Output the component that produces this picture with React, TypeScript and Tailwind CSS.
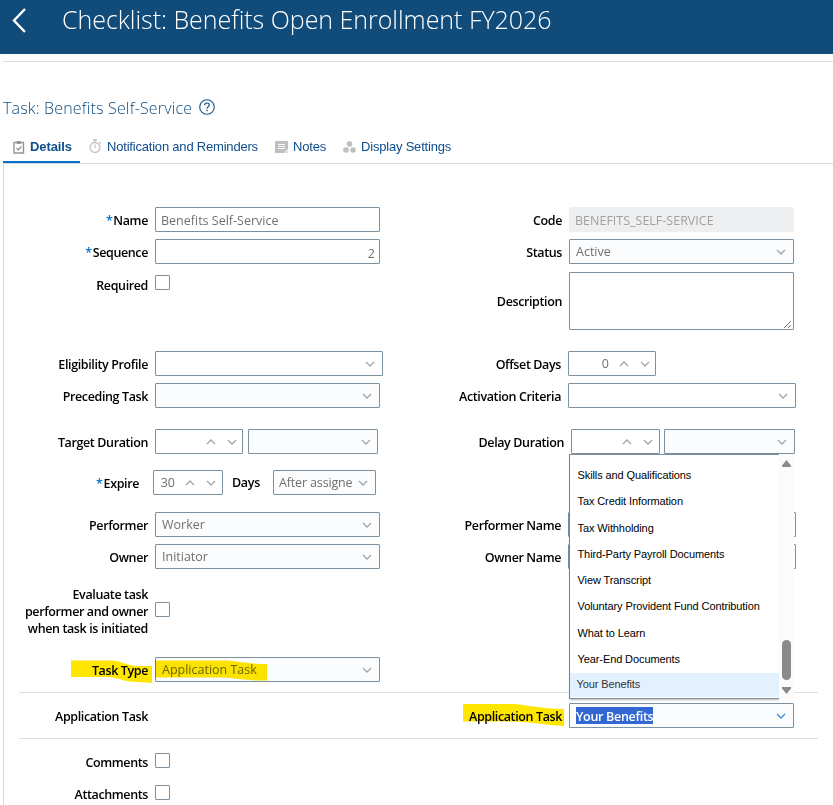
import type { ReactNode } from 'react';
import { clsx } from 'clsx';

const HIGHLIGHT = '#ffe600';

const tasks = [
  'Skills and Qualifications',
  'Tax Credit Information',
  'Tax Withholding',
  'Third-Party Payroll Documents',
  'View Transcript',
  'Voluntary Provident Fund Contribution',
  'What to Learn',
  'Year-End Documents',
];

function Chevron({ up, className = 'text-[#a3a6a9]' }: { up?: boolean; className?: string }) {
  return (
    <svg width="10" height="6" viewBox="0 0 10 6" fill="none" className={clsx('shrink-0', className)}>
      <path d={up ? 'M1 5 L5 1 L9 5' : 'M1 1 L5 5 L9 1'} stroke="currentColor" strokeWidth="1.3" />
    </svg>
  );
}

function Row({
  label,
  required,
  className,
  labelClass = 'w-[144px] top-px',
  children,
}: {
  label: ReactNode;
  required?: boolean;
  className?: string;
  labelClass?: string;
  children?: ReactNode;
}) {
  return (
    <div className={clsx('flex items-center', className)}>
      <div
        className={clsx(
          'shrink-0 mr-[7px] text-right leading-[17px] tracking-[-0.38px] whitespace-nowrap relative z-10',
          labelClass,
        )}
      >
        {required && <span className="text-[#0572ce] mr-px">*</span>}
        {label}
      </div>
      {children}
    </div>
  );
}

function Select({
  value,
  className = 'w-[225px]',
  textClass,
  pad = 'pr-[7px]',
}: {
  value?: string;
  className?: string;
  textClass?: string;
  pad?: string;
}) {
  return (
    <div className={clsx('h-[25px] shrink-0 flex items-center border border-[#7c919d] rounded-[1px] pl-1.5', className, pad)}>
      <span className={clsx('flex-1 whitespace-nowrap font-medium text-[#707070] relative top-px', textClass)}>{value}</span>
      <Chevron />
    </div>
  );
}

function Spinner({ value, className }: { value?: string; className: string }) {
  return (
    <div className={clsx('h-[25px] shrink-0 flex items-center justify-end border border-[#7c919d] rounded-[1px]', className)}>
      <span className="font-medium text-[#707070] mr-2.5 relative top-px">{value}</span>
      <Chevron up />
      <Chevron className="ml-[11px] text-[#a3a6a9]" />
    </div>
  );
}

function Checkbox({ className }: { className?: string }) {
  return <div className={clsx('size-[15px] shrink-0 border border-[#7c919d] rounded-[1px] bg-white', className)} />;
}

function Tabs() {
  return (
    <div className="flex h-[27px] ml-[3px] text-[13px] font-normal text-[#0f4d8c] font-[Liberation_Sans,Arial,sans-serif]">
      <div className="flex w-[77px] h-[27px] pl-[9px] border-b-2 border-[#0572ce] font-bold relative z-10">
        <svg width="13" height="14" viewBox="0 0 13 14" className="mt-1 mr-[5px]" fill="none" stroke="#949494">
          <path d="M2 2.5h9.500v10.500H2z" strokeWidth="1.400" />
          <path d="M5 1.500h3.500v2H5z" fill="#949494" />
          <path d="M4.500 8l1.800 1.800L9.500 6.500" strokeWidth="1.300" />
        </svg>
        <span className="leading-[21px] tracking-[-0.1px]">Details</span>
      </div>
      <div className="flex ml-[9px]">
        <svg width="13" height="15" viewBox="0 0 13 15" className="mt-[3px] mr-[5px]" fill="none" stroke="#c4c4c4">
          <circle cx="6" cy="8.500" r="5" strokeWidth="1.300" />
          <path d="M4 1h4M6 1v2M6 5.500V9M10.500 3l1.500 1.500" strokeWidth="1.300" />
        </svg>
        <span className="w-[151px] leading-[21px] tracking-[-0.2px] whitespace-nowrap">Notification and Reminders</span>
      </div>
      <div className="flex ml-[17px]">
        <svg width="13" height="12" viewBox="0 0 13 12" className="mt-[5px] mr-[5px]">
          <path d="M0 0h13v8l-4 4H0z" fill="#bfbfbf" />
          <path d="M10 12l3-3v3z" fill="#d5d5d5" />
          <path d="M3 3.500h7M3 5.500h7M3 7.500h7" stroke="#fff" strokeWidth=".9" />
        </svg>
        <span className="w-[33px] leading-[21px] tracking-[-0.2px] whitespace-nowrap">Notes</span>
      </div>
      <div className="flex ml-[17px]">
        <svg width="13" height="12" viewBox="0 0 13 12" className="mt-[5px] mr-[5px]" fill="#bfbfbf">
          <circle cx="6.500" cy="3" r="2.800" />
          <circle cx="3" cy="9" r="2.800" />
          <circle cx="10" cy="9" r="2.800" />
        </svg>
        <span className="leading-[21px] tracking-[-0.2px] whitespace-nowrap">Display Settings</span>
      </div>
    </div>
  );
}

function TaskMenu() {
  return (
    <div className="absolute left-0 bottom-[29px] w-[225px] h-[245px] z-20 flex bg-white border-l border-[#7c919d] text-[11px] text-black font-normal font-[Liberation_Sans,Arial,sans-serif]">
      <div className="w-[209px] flex flex-col border-y border-[#7c919d] pt-[7px] shadow-[0_1px_2px_rgba(0,0,0,0.3)]">
        {tasks.map((task) => (
          <div key={task} className="h-[26.3px] pl-[7.5px] leading-[26px] tracking-[-0.1px] whitespace-nowrap">
            {task}
          </div>
        ))}
        <div className="h-6 pl-[6.5px] mt-px leading-[23px] tracking-[-0.1px] bg-[#e3f1ff] text-[#333]">Your Benefits</div>
      </div>
      <div className="w-[15px] flex flex-col items-center bg-[#fbfbfb] pb-[5px]">
        <svg width="9" height="7" viewBox="0 0 9 7" className="mt-1.5" fill="#8a8a8a">
          <path d="M4.500 0L9 5.500V7H0V5.500z" />
        </svg>
        <div className="w-[9px] h-10 rounded-full bg-[#8a8a8a] mt-auto mb-[7px]" />
        <svg width="9" height="7" viewBox="0 0 9 7" fill="#8a8a8a">
          <path d="M4.500 7L9 1.500V0H0v1.500z" />
        </svg>
      </div>
    </div>
  );
}

export default function App() {
  return (
    <div className="w-[833px] h-[805px] overflow-hidden bg-white font-['Open_Sans','Noto_Sans',sans-serif] text-[12.5px] font-semibold text-black">
      <header className="h-[54px] bg-[#114b7a] flex items-start">
        <svg width="16" height="26" viewBox="0 0 16 26" fill="none" className="ml-3 mt-2 mr-[34px]">
          <path d="M13 1L2 12.500L13 24" stroke="#fff" strokeWidth="2.400" />
        </svg>
        <h1 className="text-[25px] leading-[38px] tracking-[-0.03px] font-light text-white whitespace-nowrap">
          Checklist: Benefits Open Enrollment FY2026
        </h1>
      </header>
      <div className="ml-[3px] mt-[7px] h-px bg-[#d6dfe6]" />

      <div className="flex items-center h-[30px] mt-[30px] pl-[3px]">
        <h2 className="w-[189px] text-[16px] tracking-[0.17px] font-light text-[#0f4d80] whitespace-nowrap relative top-px">
          Task: Benefits Self-Service
        </h2>
        <svg width="16" height="16" viewBox="0 0 16 16" fill="none" stroke="#145288" className="ml-[7px]">
          <circle cx="8" cy="8" r="7.300" strokeWidth="1.100" />
          <path d="M5.700 6.200C5.700 4.700 6.700 4 8 4s2.300.8 2.300 2.100C10.300 7.700 8 7.900 8 9.700" strokeWidth="1.200" />
          <path d="M8 10.800v1.400" strokeWidth="1.300" />
        </svg>
      </div>

      <div className="pt-[14px]">
        <Tabs />
      </div>

      <main className="ml-[3px] h-[642px] border-l border-t border-[#d6dade]">
        <div className="flex pt-[43px] h-[528px]">
          <div className="w-[414px]">
            <Row label="Name" required>
              <div className="w-[225px] h-[25px] border border-[#7c919d] rounded-[1px] px-[5px] leading-[25px] font-medium text-[#707070]">
                Benefits Self-Service
              </div>
            </Row>
            <Row label="Sequence" required className="mt-[7px]">
              <div className="w-[225px] h-[25px] border border-[#7c919d] rounded-[1px] px-1 text-right leading-[27px] font-medium text-[#707070]">
                2
              </div>
            </Row>
            <Row label="Required" className="mt-[9px] h-[25px]" labelClass="w-[144px]">
              <Checkbox className="relative -top-[3px]" />
            </Row>
            <Row label="Eligibility Profile" className="mt-[53px]" labelClass="w-[144px] top-px tracking-[-0.25px]">
              <Select className="w-[228px] bg-white" />
            </Row>
            <Row label="Preceding Task" className="mt-[7px]">
              <Select className="w-[225px] bg-[#fafcfe]" />
            </Row>
            <Row label="Target Duration" className="mt-[21px]">
              <Spinner className="w-[88px] pr-[5px]" />
              <Select className="w-[130px] ml-[5px] bg-[#fafcfe]" pad="pr-1.5" />
            </Row>
            <Row label="Expire" required className="mt-4" labelClass="w-[135px] top-px">
              <Spinner value="30" className="w-[70px] ml-[7px] pr-1.5" />
              <span className="w-[28px] ml-[9px] tracking-[-0.3px] relative top-px">Days</span>
              <Select
                value="After assigne"
                className="w-[103px] ml-[13px] bg-[#fafcfe]"
                textClass="-ml-px tracking-[-0.15px]"
              />
            </Row>
            <Row label="Performer" className="mt-[17px]">
              <Select value="Worker" className="w-[225px] bg-[#fafcfe]" />
            </Row>
            <Row label="Owner" className="mt-[7px]">
              <Select value="Initiator" className="w-[225px] bg-[#fafcfe]" />
            </Row>
            <Row
              className="mt-[17px]"
              labelClass="w-[144px]"
              label={
                <>
                  Evaluate task
                  <br />
                  performer and owner
                  <br />
                  when task is initiated
                </>
              }
            >
              <Checkbox className="relative -top-[2px]" />
            </Row>
            <div className="relative mt-5">
              <Row label="Task Type">
                <Select value="Application Task" className="w-[225px] bg-[#fafcfe]" />
              </Row>
              <svg width="200" height="30" className="absolute left-[67px] top-0 z-20 mix-blend-multiply" fill={HIGHLIGHT}>
                <path d="M0 3.500H43C52 5 58 9 67 9H81V26L67 25C52 25 47 20 35 20H0z" />
                <path d="M84 3.500H156C166 4 178 7 196 7V23.500C178 24 165 21 150 20.500H84z" />
              </svg>
            </div>
          </div>

          <div className="w-[380px]">
            <Row label="Code">
              <div className="w-[225px] h-[25px] bg-[#eeeff0] rounded-[2px] px-1.5 leading-[27px] font-medium text-[#a0a0a0]">
                BENEFITS_SELF-SERVICE
              </div>
            </Row>
            <Row label="Status" className="mt-[7px]">
              <Select value="Active" className="w-[225px] bg-[#fafcfe]" />
            </Row>
            <Row label="Description" className="mt-2" labelClass="w-[144px]">
              <div className="w-[225px] h-[58px] border border-[#7c919d] rounded-[1px] flex items-end justify-end">
                <svg width="9" height="9" viewBox="0 0 9 9" stroke="#666" strokeWidth=".9">
                  <path d="M0 8L7 1M4 8L7 5" />
                </svg>
              </div>
            </Row>
            <Row label="Offset Days" className="mt-[21px] -ml-px">
              <Spinner value="0" className="w-[88px] pr-[5px]" />
            </Row>
            <Row label="Activation Criteria" className="mt-[7px] -ml-px">
              <Select className="w-[228px] bg-white" />
            </Row>
            <Row label="Delay Duration" className="mt-[21px] ml-0.5">
              <Spinner className="w-[89px] pr-1.5" />
              <Select className="w-[131px] ml-1 bg-[#fafcfe]" />
            </Row>
            <Row label="Performer Name" className="mt-[58px] -ml-px">
              <Select className="w-[228px] bg-white" />
            </Row>
            <Row label="Owner Name" className="mt-[7px] -ml-px">
              <Select className="w-[228px] bg-white" />
            </Row>
          </div>
        </div>

        <section className="ml-[15px] w-[799px] h-[47px] border-y border-[#d6e0e8] flex pt-[10px]">
          <Row label="Application Task" className="w-[399px] h-[25px] -ml-[15px] mr-[15px] shrink-0" />
          <div className="relative shrink-0">
            <Row label="Application Task">
              <div className="relative w-[225px]">
                <div className="h-[25px] flex items-center border border-[#7c919d] bg-[#fafcfe] rounded-[1px] pl-1.5 pr-[7px]">
                  <span className="bg-[#3367d1] text-white h-[17px] leading-[19px] tracking-[-0.3px]">Your Benefits</span>
                  <Chevron className="ml-auto text-[#3a8fd8]" />
                </div>
                <TaskMenu />
              </div>
            </Row>
            <svg width="102" height="24" className="absolute left-[45px] top-0 z-20 mix-blend-multiply" fill={HIGHLIGHT}>
              <path d="M0 1H52C69 3 84 6 101 6V23C82 22 70 19 48 18.500H0z" />
            </svg>
          </div>
        </section>

        <Row label="Comments" className="mt-[12px] h-[25px]" labelClass="w-[144px] -top-px">
          <Checkbox className="relative -top-[3px]" />
        </Row>
        <Row label="Attachments" className="mt-[7px] h-[25px]" labelClass="w-[144px] -top-px">
          <Checkbox className="relative -top-[3px]" />
        </Row>
      </main>
    </div>
  );
}
